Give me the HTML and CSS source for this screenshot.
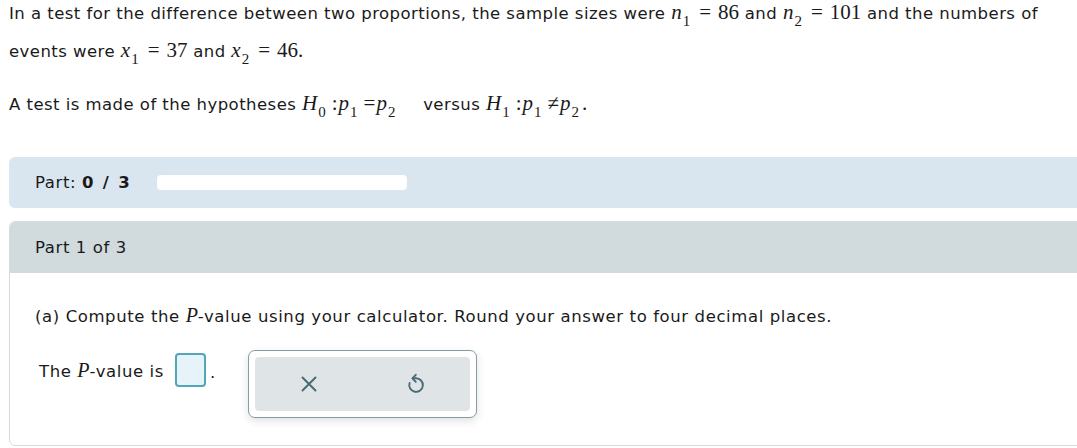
FILE: index.html
```html
<!DOCTYPE html>
<html>
<head>
<meta charset="utf-8">
<link rel="stylesheet" href="styles.css">
</head>
<body>
<div class="page">
  <p class="stem first">In a test for the difference between two proportions, the sample sizes were <span class="m"><i>n</i><span class="sub">1</span><span class="eq">=</span>86</span> and <span class="m"><i>n</i><span class="sub">2</span><span class="eq">=</span>101</span> and the numbers of events were <span class="m"><i>x</i><span class="sub">1</span><span class="eq">=</span>37</span> and <span class="m"><i>x</i><span class="sub">2</span><span class="eq">=</span>46.</span></p>
  <p class="stem second">A test is made of the hypotheses <span class="m hyp"><i>H</i><span class="sub">0</span><span class="colon">:</span><i>p</i><span class="sub">1</span><span class="rel">=</span><i>p</i><span class="sub">2</span></span> versus <span class="m"><i>H</i><span class="sub">1</span><span class="colon">:</span><i>p</i><span class="sub">1</span><span class="rel">≠</span><i>p</i><span class="sub">2</span><span class="dot">.</span></span></p>

  <div class="progress-bar">
    <span class="part-label">Part: <b>0 / 3</b></span>
    <span class="track"></span>
  </div>

  <div class="part-card">
    <div class="part-head">Part 1 of 3</div>
    <div class="part-body">
      <p class="question">(a) Compute the <i class="mi">P</i>-value using your calculator. Round your answer to four decimal places.</p>
      <div class="answer-row">
        <span class="answer-text">The <i class="mi">P</i>-value is</span>
        <span class="answer-box"></span>
        <span class="period">.</span>
        <div class="tools">
          <div class="tools-inner">
            <button class="tool" aria-label="clear">
              <svg width="16" height="16" viewBox="0 0 16 16"><path d="M1.5 1.5 L14.5 14.5 M14.5 1.5 L1.5 14.5" stroke="#4a6b76" stroke-width="2" fill="none" stroke-linecap="round"/></svg>
            </button>
            <button class="tool" aria-label="undo">
              <svg width="18" height="22" viewBox="0 0 18 22"><path d="M8.8 1.8 L5.4 5.3 L8.8 8.8" stroke="#4a6b76" stroke-width="1.9" fill="none" stroke-linecap="round" stroke-linejoin="round"/><path d="M5.8 5.3 H9 A6.8 6.8 0 1 1 2.6 10" stroke="#4a6b76" stroke-width="1.9" fill="none" stroke-linecap="round"/></svg>
            </button>
          </div>
        </div>
      </div>
    </div>
  </div>
</div>
</body>
</html>
```

FILE: styles.css
```css
html, body {
  margin: 0;
  padding: 0;
  overflow: hidden;
  background: #ffffff;
}
body {
  font-family: "DejaVu Sans", Verdana, sans-serif;
  font-size: 16.5px;
  letter-spacing: 0.6px;
  color: #1a1a1a;
}
.page {
  width: 1090px;
  padding-left: 9px;
}
.stem {
  margin: 0;
  line-height: 37px;
  width: 1062px;
  letter-spacing: 0.46px;
}
.stem.first {
  margin-top: -6px;
}
.stem.second {
  margin-top: 15px;
}
.m {
  font-family: "Liberation Serif", "Times New Roman", serif;
  font-size: 21px;
  letter-spacing: 0;
  white-space: nowrap;
}
.m i {
  font-style: italic;
}
.sub {
  font-size: 15px;
  line-height: 15px;
  vertical-align: -7px;
  margin-left: 1px;
}
.eq {
  margin: 0 7px 0 9px;
}
.colon {
  margin: 0 1px 0 6px;
}
.rel {
  margin: 0 1px 0 6px;
}
.hyp {
  margin-right: 22px;
}
.dot {
  margin-left: 3px;
}
.progress-bar {
  margin-top: 34px;
  height: 51px;
  background: #dae6ef;
  border-radius: 6px 0 0 6px;
  display: flex;
  align-items: center;
  padding-left: 26px;
  gap: 26px;
}
.part-label b {
  font-weight: bold;
  letter-spacing: 1.8px;
}
.track {
  width: 250px;
  height: 15px;
  background: #ffffff;
  border-radius: 4px;
}
.part-card {
  margin-top: 13px;
  border: 1px solid #d5dcdf;
  border-radius: 6px 0 0 6px;
  overflow: hidden;
}
.part-head {
  height: 51px;
  background: #d1dadd;
  display: flex;
  align-items: center;
  padding-left: 25px;
}
.part-body {
  padding: 26px 25px 0 25px;
  height: 146px;
}
.question {
  margin: 0;
  line-height: 32px;
}
.mi {
  font-family: "Liberation Serif", serif;
  font-size: 20px;
  letter-spacing: 0;
}
.answer-row {
  display: flex;
  align-items: flex-start;
  margin-top: 17px;
  padding-left: 4px;
}
.answer-text {
  line-height: 24px;
  margin-top: 8px;
}
.answer-box {
  width: 27px;
  height: 30px;
  border: 2px solid #52a6b6;
  border-radius: 4px;
  background: #e6f3f8;
  margin-left: 11px;
  margin-top: 3px;
}
.period {
  margin-left: 4px;
  margin-top: 11px;
  line-height: 24px;
}
.tools {
  margin-left: 32px;
  width: 215px;
  padding: 6px;
  border: 1px solid #879ca4;
  border-radius: 7px;
  background: #ffffff;
  box-shadow: 0 3px 8px rgba(0, 0, 0, 0.12);
}
.tools-inner {
  height: 54px;
  background: #dfe5e7;
  border-radius: 4px;
  display: flex;
  align-items: center;
  justify-content: space-around;
}
.tool {
  border: none;
  background: transparent;
  padding: 0;
  width: 40px;
  height: 40px;
  display: flex;
  align-items: center;
  justify-content: center;
}
```
